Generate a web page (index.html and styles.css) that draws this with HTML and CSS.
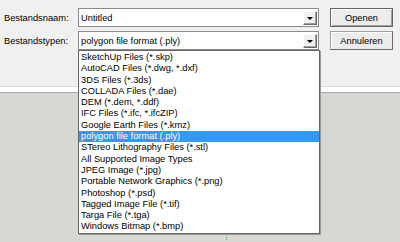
FILE: index.html
```html
<!DOCTYPE html>
<html>
<head>
<meta charset="utf-8">
<link rel="stylesheet" href="styles.css">
</head>
<body>
<div class="dialog">
  <div class="row">
    <span class="lbl">Bestandsnaam:</span>
    <div class="combo"><span class="val">Untitled</span><span class="arrow"><span class="tri"></span></span></div>
    <button class="btn default">Openen</button>
  </div>
  <div class="row">
    <span class="lbl">Bestandstypen:</span>
    <div class="combo"><span class="val">polygon file format (.ply)</span><span class="arrow"><span class="tri"></span></span></div>
    <button class="btn">Annuleren</button>
  </div>
</div>
<div class="sep"></div>
<div class="canvas"><span class="mark"></span></div>
<ul class="list">
  <li>SketchUp Files (*.skp)</li>
  <li>AutoCAD Files (*.dwg, *.dxf)</li>
  <li>3DS Files (*.3ds)</li>
  <li>COLLADA Files (*.dae)</li>
  <li>DEM (*.dem, *.ddf)</li>
  <li>IFC Files (*.ifc, *.ifcZIP)</li>
  <li>Google Earth Files (*.kmz)</li>
  <li class="sel">polygon file format (.ply)</li>
  <li>STereo Lithography Files (*.stl)</li>
  <li>All Supported Image Types</li>
  <li>JPEG Image (*.jpg)</li>
  <li>Portable Network Graphics (*.png)</li>
  <li>Photoshop (*.psd)</li>
  <li>Tagged Image File (*.tif)</li>
  <li>Targa File (*.tga)</li>
  <li>Windows Bitmap (*.bmp)</li>
</ul>
</body>
</html>
```

FILE: styles.css
```css
* { box-sizing: border-box; }
html, body { margin: 0; padding: 0; }
body {
  width: 400px;
  height: 242px;
  overflow: hidden;
  font-family: "Liberation Sans", Arial, sans-serif;
  font-size: 9.3px;
  color: #000;
  background: #d8d7d3;
  position: relative;
  display: flex;
  flex-direction: column;
}
.dialog {
  height: 86px;
  background: #f0f0f0;
  padding: 8px 0 0 4px;
  display: flex;
  flex-direction: column;
  gap: 4px;
  flex: none;
}
.row {
  display: flex;
  align-items: center;
  height: 19px;
}
.lbl {
  width: 74px;
}
.combo {
  width: 241px;
  height: 19px;
  background: #fff;
  border: 1px solid #8a8a8a;
  display: flex;
  align-items: center;
  justify-content: space-between;
  padding-left: 2px;
}
.val { white-space: nowrap; }
.arrow {
  width: 14px;
  height: 14px;
  margin-right: 1px;
  background: #f0f0f0;
  border-top: 1px solid #fff;
  border-left: 1px solid #fff;
  border-right: 1px solid #696969;
  border-bottom: 1px solid #696969;
  box-shadow: inset -1px -1px 0 #a0a0a0;
  display: flex;
  align-items: center;
  justify-content: center;
}
.tri {
  width: 0;
  height: 0;
  border-left: 3px solid transparent;
  border-right: 3px solid transparent;
  border-top: 3px solid #000;
  margin-top: 1px;
}
.btn {
  margin-left: 11px;
  width: 63px;
  height: 19px;
  font: inherit;
  color: #000;
  background: #ececec;
  border: 1px solid #a0a0a0;
  border-right-color: #696969;
  border-bottom-color: #696969;
  box-shadow: inset 1px 1px 0 #fff;
  padding: 0;
}
.btn.default {
  border: 1px solid #646464;
  box-shadow: inset 1px 1px 0 #fff, inset -1px -1px 0 #a0a0a0;
}
.sep {
  flex: none;
  height: 7px;
  border-top: 1px solid #dadada;
  border-bottom: 1px solid #a9a9a9;
  background: #fff;
}
.canvas {
  flex: 1;
  background: #d8d7d3;
  position: relative;
}
.mark {
  position: absolute;
  left: 226px;
  top: 144px;
  width: 1px;
  height: 4px;
  background: repeating-linear-gradient(#4caf50 0 1px, transparent 1px 2px);
}
.list {
  position: absolute;
  left: 78px;
  top: 50px;
  width: 242px;
  height: 184px;
  margin: 0;
  padding: 1px 0 0 0;
  list-style: none;
  background: #fff;
  border: 1px solid #646464;
  box-shadow: 1px 1px 0 #9a9a9a;
}
.list li {
  height: 11.3px;
  line-height: 11.3px;
  padding-left: 2px;
  white-space: nowrap;
}
.list li.sel {
  background: #3399ff;
  color: #fff;
}
```
